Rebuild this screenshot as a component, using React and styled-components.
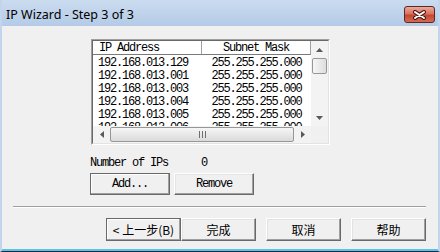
import React from "react";
import styled, { createGlobalStyle } from "styled-components";

const GlobalStyle = createGlobalStyle`
  html, body {
    margin: 0;
    padding: 0;
    background: #f0f0f0;
  }
  body {
    font-family: "Liberation Mono", monospace;
  }
`;

const ips = [
  "192.168.013.129",
  "192.168.013.001",
  "192.168.013.003",
  "192.168.013.004",
  "192.168.013.005",
  "192.168.013.006",
];

const Window = styled.div`
  width: 440px;
  height: 252px;
  box-sizing: border-box;
  display: flex;
  flex-direction: column;
  border-left: 2px solid #c2d5ec;
  border-right: 2px solid #c2d5ec;
  border-bottom: 1px solid #1d2b38;
  background: #f0f0f0;
  overflow: hidden;
`;

const TitleBar = styled.div`
  height: 26px;
  flex: none;
  display: flex;
  justify-content: space-between;
  padding: 0 3px 0 4px;
  background: linear-gradient(#cbdcef, #b4cae6);
`;

const Title = styled.div`
  font-family: "Noto Sans", sans-serif;
  font-size: 12.5px;
  line-height: 26px;
  padding-top: 2px;
  color: #000;
`;

const CloseButton = styled.div`
  width: 31px;
  height: 17px;
  margin-top: 6px;
  box-sizing: border-box;
  border: 1px solid #5e2626;
  border-radius: 3px;
  background: linear-gradient(#eaa999 0%, #d8735f 45%, #c5462f 55%, #d36c52 100%);
  display: flex;
  align-items: center;
  justify-content: center;
`;

const Client = styled.div`
  flex: 1;
  display: flex;
  flex-direction: column;
  background: #f0f0f0;
  border-bottom: 2px solid #58c4ea;
  padding-top: 13px;
`;

const Body = styled.div`
  padding-left: 88px;
`;

const ListView = styled.div`
  width: 239px;
  height: 106px;
  margin-left: 1px;
  box-sizing: border-box;
  border: 1px solid;
  border-color: #a0a0a0 #fff #fff #a0a0a0;
`;

const ListInner = styled.div`
  height: 100%;
  box-sizing: border-box;
  border: 1px solid;
  border-color: #696969 #e3e3e3 #e3e3e3 #696969;
  display: grid;
  grid-template-columns: 218px 17px;
  grid-template-rows: 85px 17px;
`;

const Table = styled.div`
  overflow: hidden;
  background: #fff;
`;

const Row = styled.div`
  display: flex;
  height: ${(p) => (p.$head ? 14 : 13)}px;
`;

const Cell = styled.div`
  width: 109px;
  flex: none;
  box-sizing: border-box;
  font-size: 12px;
  letter-spacing: -1.2px;
  line-height: 13px;
  padding-top: 2px;
  color: #000;
  white-space: nowrap;
  text-align: ${(p) => p.$align};
  padding-left: ${(p) => (p.$align === "left" ? p.$pad : 0)}px;
`;

const HeadCell = styled(Cell)`
  padding-top: 1px;
  line-height: 12px;
  border-right: 1px solid #a0a0a0;
  border-bottom: 1px solid #7a7a7a;
  background: #fff;
`;

const Track = styled.div`
  display: flex;
  flex-direction: ${(p) => (p.$vertical ? "column" : "row")};
  background: #f3f3f3;
`;

const ArrowBox = styled.div`
  width: 17px;
  height: 17px;
  flex: none;
  display: flex;
  align-items: center;
  justify-content: center;
`;

const Spacer = styled.div`
  flex: 1;
`;

const Thumb = styled.div`
  box-sizing: border-box;
  border: 1px solid #979797;
  border-radius: 2px;
  display: flex;
  align-items: center;
  justify-content: center;
  ${(p) =>
    p.$vertical
      ? `width: 15px; height: 16px; margin-left: 1px;
         background: linear-gradient(to right, #f6f6f6, #dedede);`
      : `flex: 1; margin: 1px 0;
         background: linear-gradient(#f6f6f6, #dadada);`}
`;

const Corner = styled.div`
  background: #f0f0f0;
`;

const CountRow = styled.div`
  display: flex;
  margin-top: 11px;
  height: 14px;
  line-height: 14px;
  font-size: 12px;
  letter-spacing: -1.2px;
  color: #000;
`;

const CountLabel = styled.div`
  width: 111px;
`;

const ButtonRow = styled.div`
  display: flex;
  gap: ${(p) => p.$gap}px;
  margin-top: ${(p) => p.$top}px;
`;

const Button = styled.button`
  width: ${(p) => p.$w}px;
  height: ${(p) => p.$h}px;
  box-sizing: border-box;
  margin: 0;
  padding: 0;
  background: #f0f0f0;
  border: 1px solid;
  border-color: ${(p) => (p.$focus ? "#696969" : "#fff")} #696969 #696969
    ${(p) => (p.$focus ? "#696969" : "#fff")};
  box-shadow: inset -1px -1px 0 #a0a0a0,
    inset 1px 1px 0 ${(p) => (p.$focus ? "#fff" : "#e3e3e3")};
  color: #000;
  font-family: ${(p) =>
    p.$cjk ? '"Noto Sans CJK SC", sans-serif' : '"Liberation Mono", monospace'};
  font-size: 12px;
  letter-spacing: ${(p) => (p.$cjk ? 0 : -1.2)}px;
  line-height: 1;
`;

const Separator = styled.div`
  height: 0;
  border-top: 1px solid #a0a0a0;
  border-bottom: 1px solid #fff;
  margin: 11px 12px 0 11px;
`;

const Footer = styled.div`
  display: flex;
  justify-content: flex-end;
  gap: 10px;
  padding-right: 12px;
  margin-top: 10px;
`;

const Pair = styled.div`
  display: flex;
`;

function Arrow({ dir }) {
  const pts = {
    up: "0,4 3.5,0 7,4",
    down: "0,0 3.5,4 7,0",
    left: "4,0 0,3.5 4,7",
    right: "0,0 4,3.5 0,7",
  }[dir];
  const vertical = dir === "up" || dir === "down";
  return (
    <svg width={vertical ? 7 : 4} height={vertical ? 4 : 7}>
      <polygon points={pts} fill="#5a5a5a" />
    </svg>
  );
}

function Grip() {
  return (
    <svg width="7" height="7">
      <rect x="0" y="0" width="1" height="7" fill="#6e6e6e" />
      <rect x="3" y="0" width="1" height="7" fill="#6e6e6e" />
      <rect x="6" y="0" width="1" height="7" fill="#6e6e6e" />
    </svg>
  );
}

export default function App() {
  return (
    <>
      <GlobalStyle />
      <Window>
        <TitleBar>
          <Title>IP Wizard - Step 3 of 3</Title>
          <CloseButton>
            <svg width="13" height="10">
              <path d="M2 2 L11 8 M11 2 L2 8" stroke="#4a1818" strokeWidth="4" strokeLinecap="round" />
              <path d="M2 2 L11 8 M11 2 L2 8" stroke="#fff" strokeWidth="2" strokeLinecap="round" />
            </svg>
          </CloseButton>
        </TitleBar>
        <Client>
          <Body>
            <ListView>
              <ListInner>
                <Table>
                  <Row $head>
                    <HeadCell $align="left" $pad={6}>IP Address</HeadCell>
                    <HeadCell $align="center">Subnet Mask</HeadCell>
                  </Row>
                  {ips.map((ip) => (
                    <Row key={ip}>
                      <Cell $align="left" $pad={5}>{ip}</Cell>
                      <Cell $align="center">255.255.255.000</Cell>
                    </Row>
                  ))}
                </Table>
                <Track $vertical>
                  <ArrowBox><Arrow dir="up" /></ArrowBox>
                  <Thumb $vertical />
                  <Spacer />
                  <ArrowBox><Arrow dir="down" /></ArrowBox>
                </Track>
                <Track>
                  <ArrowBox><Arrow dir="left" /></ArrowBox>
                  <Thumb><Grip /></Thumb>
                  <ArrowBox><Arrow dir="right" /></ArrowBox>
                </Track>
                <Corner />
              </ListInner>
            </ListView>
            <CountRow>
              <CountLabel>Number of IPs</CountLabel>
              <div>0</div>
            </CountRow>
            <ButtonRow $gap={4} $top={3}>
              <Button $w={80} $h={22} $focus>Add...</Button>
              <Button $w={80} $h={22}>Remove</Button>
            </ButtonRow>
          </Body>
          <Separator />
          <Footer>
            <Pair>
              <Button $w={75} $h={23} $cjk $focus>&lt; 上一步(B)</Button>
              <Button $w={75} $h={23} $cjk>完成</Button>
            </Pair>
            <Button $w={75} $h={23} $cjk>取消</Button>
            <Button $w={75} $h={23} $cjk>帮助</Button>
          </Footer>
        </Client>
      </Window>
    </>
  );
}
